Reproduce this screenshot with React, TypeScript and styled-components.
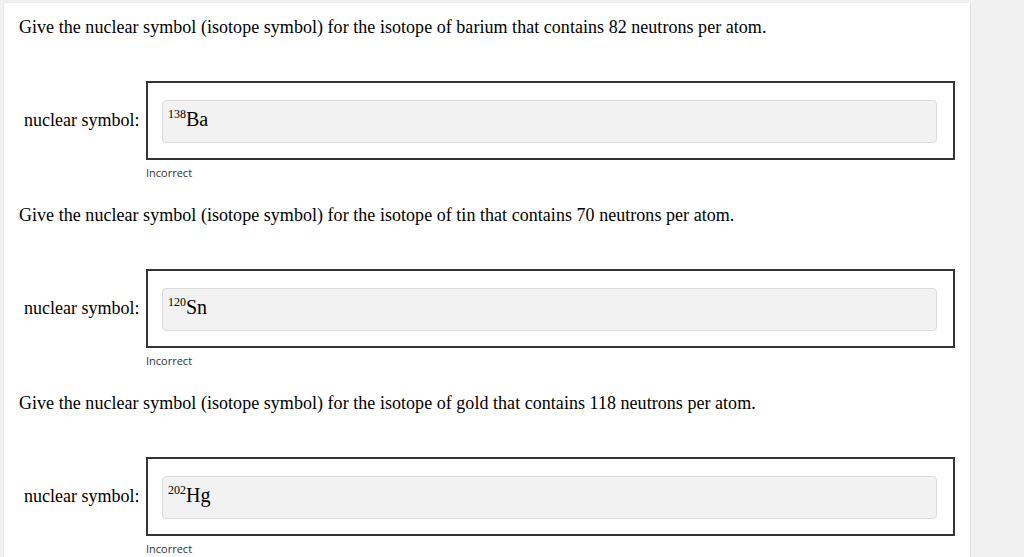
import styled, { createGlobalStyle } from "styled-components";

const GlobalStyle = createGlobalStyle`
  html, body {
    margin: 0;
    padding: 0;
    background: #f1f1f1;
  }
  body {
    font-family: "Liberation Serif", "Times New Roman", serif;
    color: #000;
  }
`;

const Page = styled.div`
  height: 557px;
  overflow: hidden;
  padding: 3px 0 0 4px;
  box-sizing: border-box;
`;

const Panel = styled.main`
  width: 966px;
  min-height: 560px;
  background: #fff;
  box-sizing: border-box;
  padding: 12px 15px 0 15px;
  box-shadow: 1px 0 0 #e2e2e2, -1px 0 0 #e8e8e8, 0 -1px 0 #ececec;
`;

const Block = styled.section`
  margin-bottom: 22px;
`;

const Question = styled.p`
  margin: 0 0 42px 0;
  font-size: 18px;
  line-height: 24px;
  letter-spacing: 0.04px;
`;

const Row = styled.div`
  display: flex;
  align-items: center;
  padding-left: 5px;
`;

const Label = styled.span`
  font-size: 18px;
  width: 122px;
  flex-shrink: 0;
`;

const AnswerBox = styled.div`
  width: 809px;
  height: 79px;
  box-sizing: border-box;
  border: 2px solid #333;
  padding: 17px 16px 15px 14px;
`;

const Field = styled.div`
  height: 43px;
  box-sizing: border-box;
  background: #f2f2f2;
  border: 1px solid #dcdcdc;
  border-radius: 4px;
  padding: 6px 6px 0 5px;
  font-size: 20px;
  line-height: 24px;
`;

const Mass = styled.sup`
  font-size: 12px;
  vertical-align: 0;
  position: relative;
  top: -8px;
`;

const Feedback = styled.div`
  margin: 5px 0 0 127px;
  font-family: "Open Sans", "Noto Sans", sans-serif;
  font-size: 11px;
  line-height: 16px;
  color: #333;
`;

const questions = [
  { element: "barium", neutrons: 82, mass: 138, symbol: "Ba" },
  { element: "tin", neutrons: 70, mass: 120, symbol: "Sn" },
  { element: "gold", neutrons: 118, mass: 202, symbol: "Hg" },
];

export default function App() {
  return (
    <Page>
      <GlobalStyle />
      <Panel>
        {questions.map((q) => (
          <Block key={q.element}>
            <Question>
              Give the nuclear symbol (isotope symbol) for the isotope of {q.element} that
              contains {q.neutrons} neutrons per atom.
            </Question>
            <Row>
              <Label>nuclear symbol:</Label>
              <AnswerBox>
                <Field>
                  <Mass>{q.mass}</Mass>
                  {q.symbol}
                </Field>
              </AnswerBox>
            </Row>
            <Feedback>Incorrect</Feedback>
          </Block>
        ))}
      </Panel>
    </Page>
  );
}
